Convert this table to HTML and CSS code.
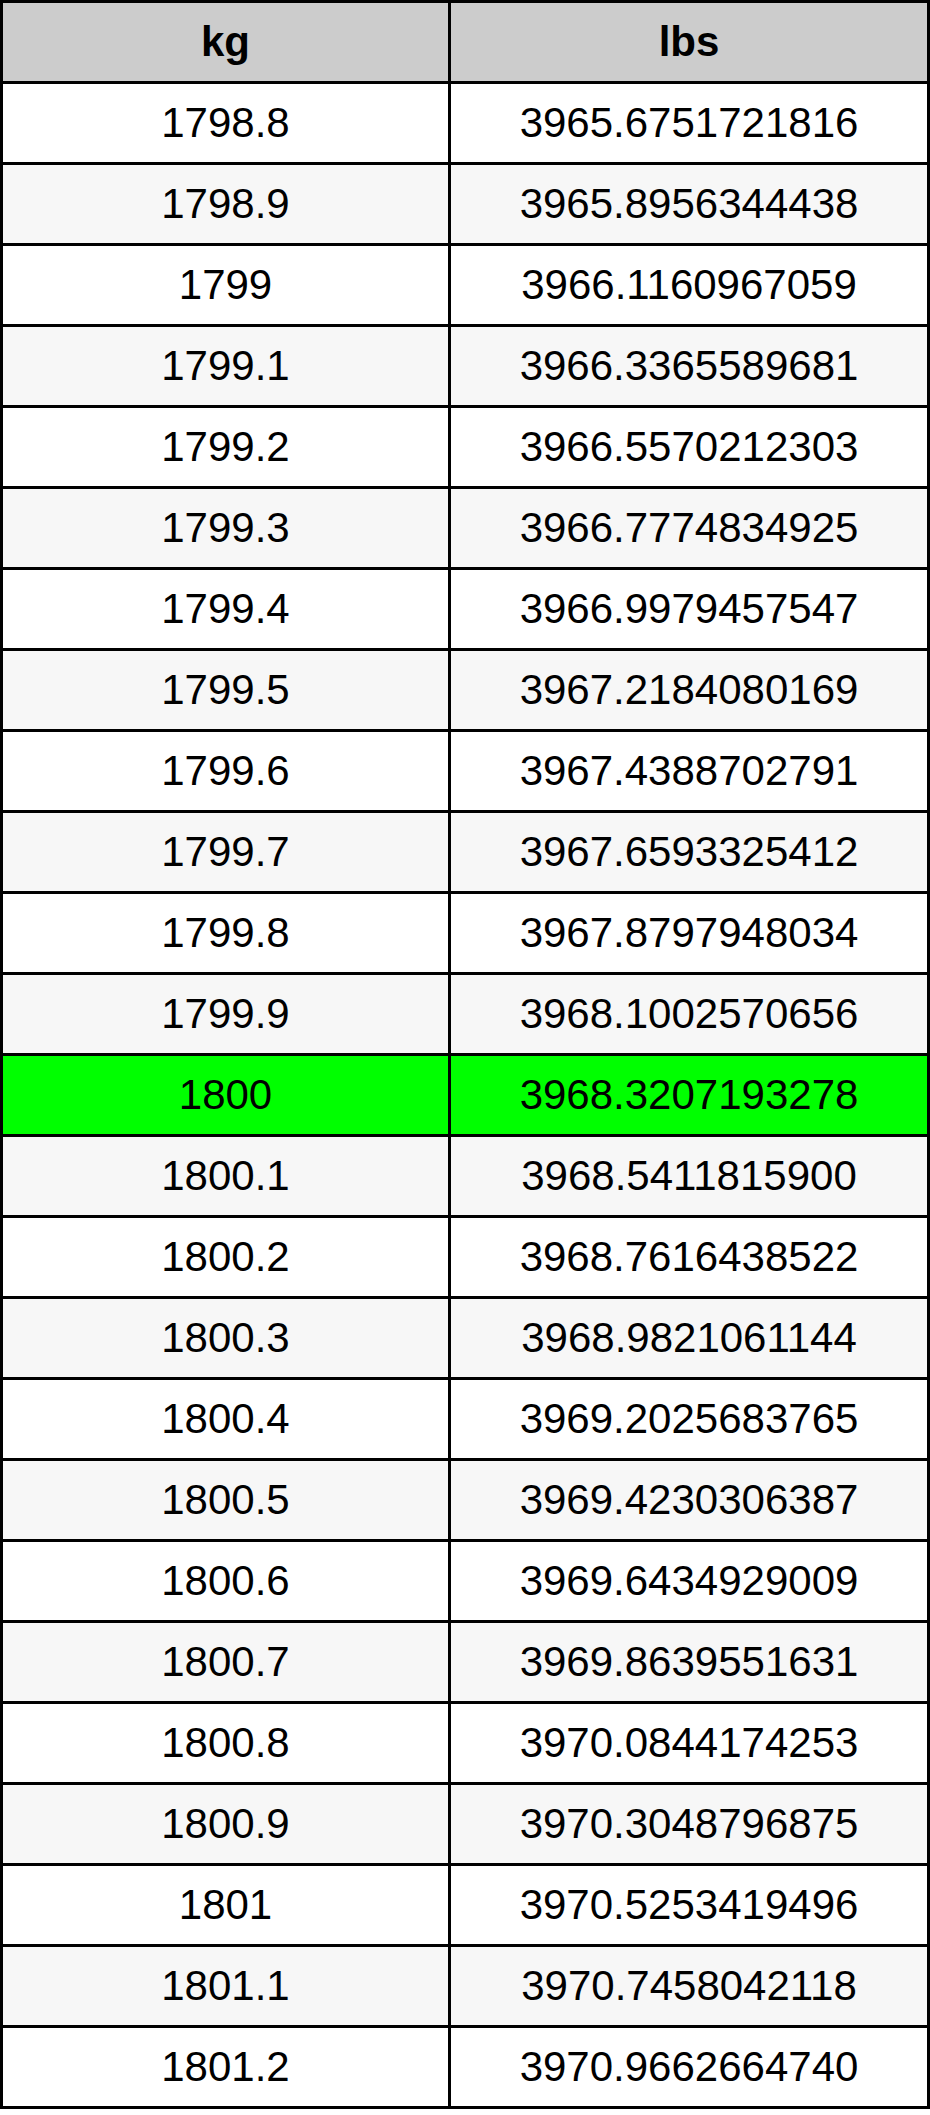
FILE: index.html
```html
<!DOCTYPE html>
<html lang="en">
<head>
<meta charset="utf-8">
<title>kg to lbs</title>
<link rel="stylesheet" href="styles.css">
</head>
<body>
<table class="conv">
<colgroup><col class="c-kg"><col class="c-lbs"></colgroup>
<thead>
<tr><th>kg</th><th>lbs</th></tr>
</thead>
<tbody>
<tr><td>1798.8</td><td>3965.6751721816</td></tr>
<tr class="alt"><td>1798.9</td><td>3965.8956344438</td></tr>
<tr><td>1799</td><td>3966.1160967059</td></tr>
<tr class="alt"><td>1799.1</td><td>3966.3365589681</td></tr>
<tr><td>1799.2</td><td>3966.5570212303</td></tr>
<tr class="alt"><td>1799.3</td><td>3966.7774834925</td></tr>
<tr><td>1799.4</td><td>3966.9979457547</td></tr>
<tr class="alt"><td>1799.5</td><td>3967.2184080169</td></tr>
<tr><td>1799.6</td><td>3967.4388702791</td></tr>
<tr class="alt"><td>1799.7</td><td>3967.6593325412</td></tr>
<tr><td>1799.8</td><td>3967.8797948034</td></tr>
<tr class="alt"><td>1799.9</td><td>3968.1002570656</td></tr>
<tr class="hl"><td>1800</td><td>3968.3207193278</td></tr>
<tr class="alt"><td>1800.1</td><td>3968.5411815900</td></tr>
<tr><td>1800.2</td><td>3968.7616438522</td></tr>
<tr class="alt"><td>1800.3</td><td>3968.9821061144</td></tr>
<tr><td>1800.4</td><td>3969.2025683765</td></tr>
<tr class="alt"><td>1800.5</td><td>3969.4230306387</td></tr>
<tr><td>1800.6</td><td>3969.6434929009</td></tr>
<tr class="alt"><td>1800.7</td><td>3969.8639551631</td></tr>
<tr><td>1800.8</td><td>3970.0844174253</td></tr>
<tr class="alt"><td>1800.9</td><td>3970.3048796875</td></tr>
<tr><td>1801</td><td>3970.5253419496</td></tr>
<tr class="alt"><td>1801.1</td><td>3970.7458042118</td></tr>
<tr><td>1801.2</td><td>3970.9662664740</td></tr>
</tbody>
</table>
</body>
</html>
```
FILE: styles.css
```css
html, body {
  margin: 0;
  padding: 0;
  background: #ffffff;
}

.conv {
  width: 930px;
  table-layout: fixed;
  border-collapse: separate;
  border-spacing: 3px;
  background: #000000;
  font-family: "Liberation Sans", Arial, sans-serif;
  font-size: 42px;
  color: #000000;
}

.c-kg { width: 445px; }
.c-lbs { width: 476px; }

.conv th,
.conv td {
  height: 78px;
  padding: 0;
  text-align: center;
  vertical-align: middle;
  background: #ffffff;
}

.conv th {
  background: #cccccc;
  font-weight: bold;
}

.conv tr.alt td {
  background: #f7f7f7;
}

.conv tr.hl td {
  background: #00ff00;
}
```
